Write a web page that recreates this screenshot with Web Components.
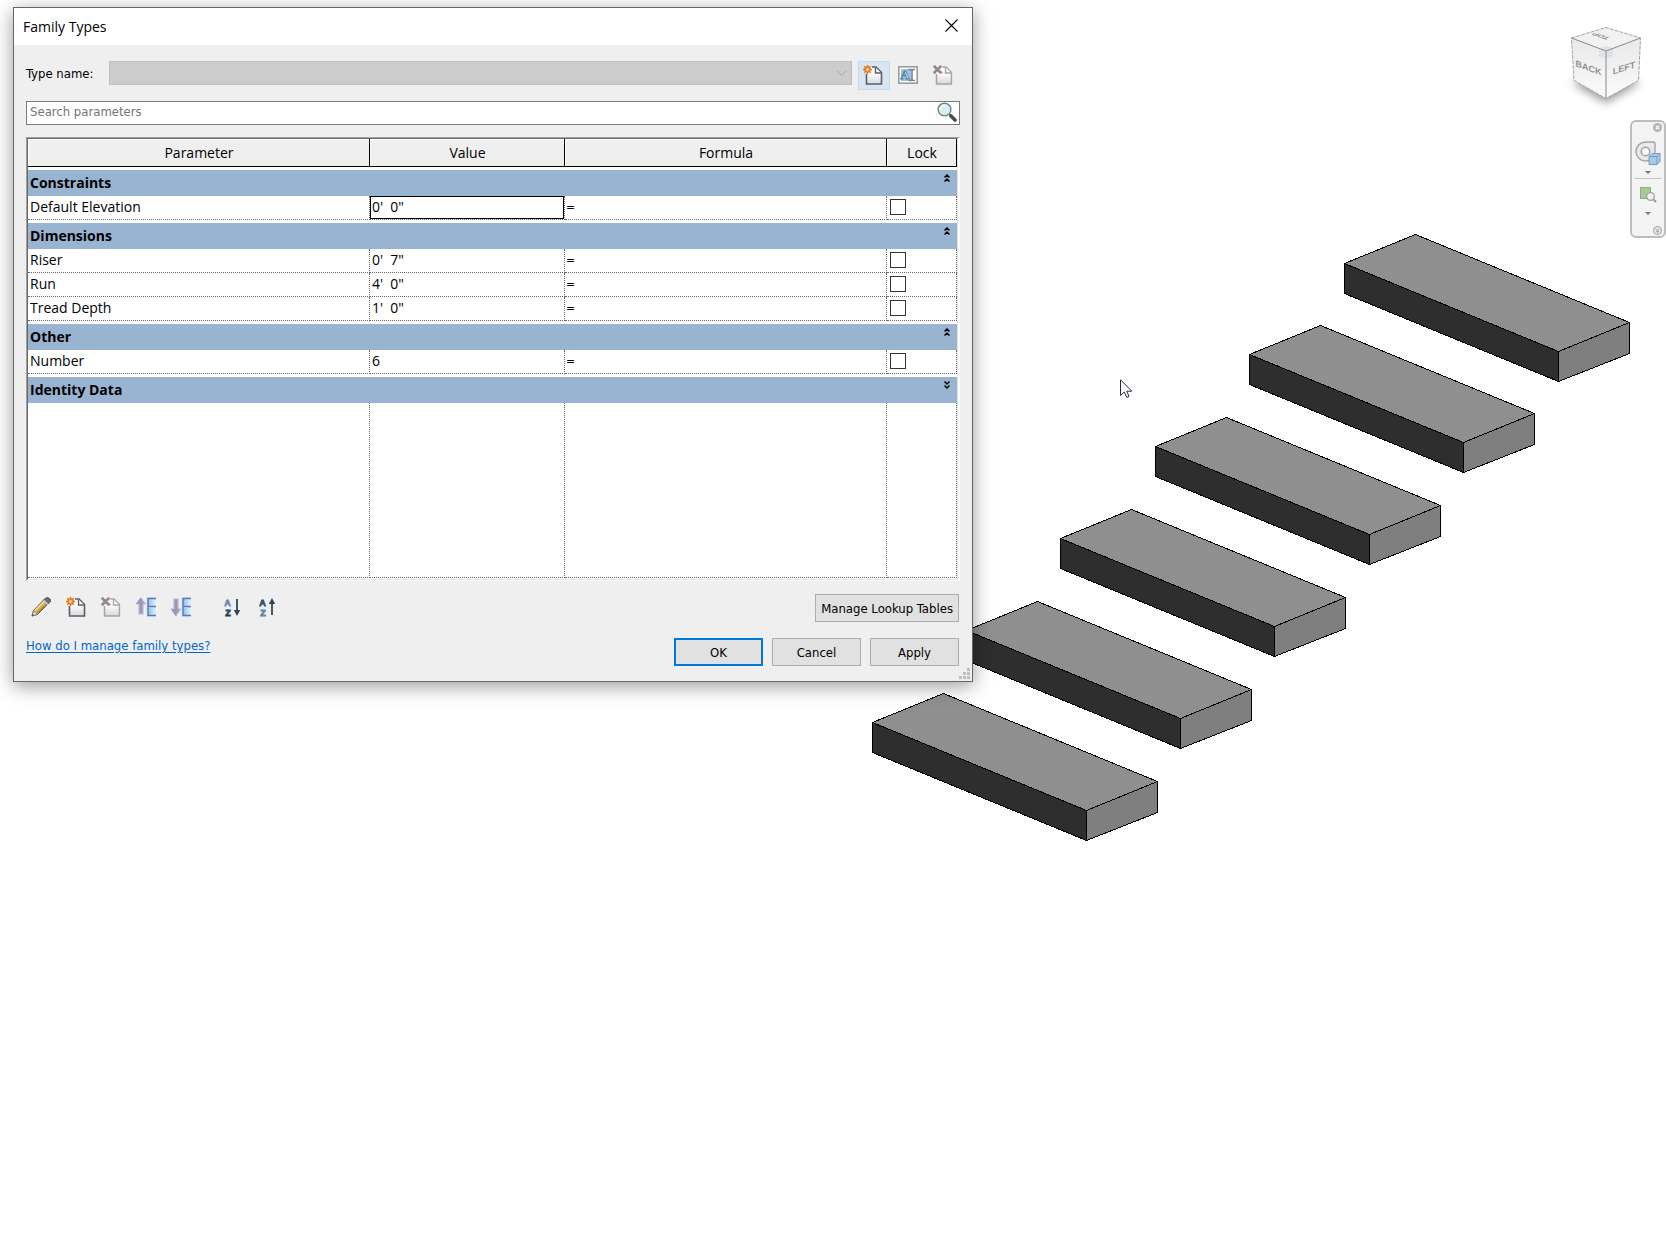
<!DOCTYPE html>
<html lang="en">
<head>
<meta charset="utf-8">
<title>Family Types</title>
<style>
  html, body { height: 100%; }
  body { margin: 0; background: #fff; overflow: hidden; }
</style>
</head>
<body>

<model-viewport>
  <view-cube slot="cube"></view-cube>
  <nav-bar slot="nav"></nav-bar>
  <mouse-cursor slot="cursor"></mouse-cursor>

  <dialog-window slot="window" caption="Family Types">
    <type-name-row></type-name-row>
    <search-box></search-box>
    <param-grid></param-grid>
    <dialog-footer></dialog-footer>
  </dialog-window>
</model-viewport>

<script>
const page = `
  <path d="M3.5 6V19.2H18.5V7.5L13 2H8Z" fill="url(#pg)" stroke="none"/>
  <path d="M3.5 9V19H18.5V7.5L13 2H9" fill="none" stroke="var(--ink)" stroke-width="1.6"/>
  <path d="M12.5 2.5V8H18" fill="#fff" stroke="var(--ink)" stroke-width="1.4"/>`;
const pageGradient = `
  <linearGradient id="pg" x1="0" y1="0" x2="0" y2="1">
    <stop offset=".3" stop-color="#fff"/><stop offset="1" stop-color="#d9d9de"/>
  </linearGradient>`;
const levels = `
  <linearGradient id="lv"><stop offset="0" stop-color="#8fc0ea"/><stop offset="1" stop-color="#e4f3fc"/></linearGradient>
  <rect x="10.5" y="0" width="9.5" height="19.5" fill="#e6daf5"/>
  <rect x="12" y="1" width="8" height="8" fill="url(#lv)"/>
  <rect x="12" y="11" width="8" height="7.5" fill="url(#lv)"/>
  <path d="M20 1.5H12V18.5H20M12 9.5H20" fill="none" stroke="#4a80bd" stroke-width="1.4"/>`;
const letters = (top) => `
  <g font-family="'Liberation Sans', sans-serif" font-weight="bold" font-size="9" text-anchor="middle" stroke-width=".8">
    <text x="5.5" y="8.5" fill="${top ? "#6c8db4" : "#35506f"}" stroke="${top ? "#6c8db4" : "#35506f"}">A</text>
    <text x="6" y="19" fill="${top ? "#27425f" : "#6584aa"}" stroke="${top ? "#27425f" : "#6584aa"}">Z</text>
  </g>`;

const ICONS = {
  "new": `<g style="--ink:#5c5f66">${pageGradient}${page}</g>
    <path d="M4.5 0V9M0 4.5H9M1.3 1.3L7.7 7.7M7.7 1.3L1.3 7.7" stroke="#e8771a" stroke-width="1.5"/>
    <circle cx="4.5" cy="4.5" r="2.8" fill="#f9a03c" stroke="#dd6510"/>
    <circle cx="4.5" cy="4.5" r="1.2" fill="#ffe2a0"/>`,
  "delete": `<path d="M2.5 6V20H20V7L13 1H8Z" fill="#fff"/>
    <g style="--ink:#a5a5a8">${pageGradient}${page}</g>
    <path d="M.8 .8L8.2 8.2M8.2 .8L.8 8.2" stroke="#fff" stroke-width="4"/>
    <path d="M.8 .8L8.2 8.2M8.2 .8L.8 8.2" stroke="#938a8a" stroke-width="2.8"/>
    <path d="M8 6.5l1.5 1.5" stroke="#d0806f" stroke-width="1.5"/>`,
  "rename": `<rect x=".8" y="1.8" width="18.4" height="16.4" fill="#fff" stroke="#9b9b9b" stroke-width="1.6"/>
    <rect x="3" y="4" width="10" height="12" fill="#93c6e8"/>
    <text x="7" y="14" font-family="'Liberation Serif', serif" font-weight="bold" font-size="13" text-anchor="middle" fill="#e9f5fc" stroke="#5c7f9c" stroke-width=".8">A</text>
    <path d="M10.5 4.5H13L14 5.5L15 4.5H17M14 5V15M10.5 15.5H13L14 14.5L15 15.5H17" fill="none" stroke="#78828c" stroke-width="1.6"/>`,
  "search": `<path d="M12 12L14 14" stroke="#777" stroke-width="2"/>
    <path d="M14 14L18 18" stroke="#474b4d" stroke-width="3.6" stroke-linecap="round"/>
    <circle cx="7.5" cy="7.5" r="6.4" fill="#d5eef1" stroke="#70797b" stroke-width="1.3"/>
    <path d="M3.5 8a4.5 4.5 0 0 1 4-4.5" fill="none" stroke="#fff" stroke-width="1.8"/>`,
  "edit": `<path d="M1 19L2.5 13.5L13.5 2L18 6L6.5 17.5Z" fill="#d3ac5f" stroke="#655a45"/>
    <path d="M4 13.5L14 3.5" stroke="#f4dfa8" stroke-width="1.6"/>
    <path d="M6.5 16L16.5 6.5" stroke="#a67c38" stroke-width="1.4"/>
    <path d="M12.8 3.2L15 .8Q17 0 19 2T19 5L17 7.2Z" fill="#7a6668" stroke="#5b5b60"/>
    <path d="M12.6 3.4L16.8 7.4" stroke="#c3c8cd" stroke-width="1.6"/>
    <path d="M1 19L2.5 13.8L6.2 17.4Z" fill="#f3e8d8" stroke="#7b7b78" stroke-width=".8"/>
    <path d="M.6 19.4L3 17.9L2 16.8Z" fill="#444"/>`,
  "up": `${levels}<path d="M5 1L9.5 7H7V17H3V7H.5Z" fill="#9b9b9f" stroke="#c6b0e6" stroke-width="1.2"/>
    <path d="M.5 7L5 1" stroke="#7387d8"/>`,
  "down": `${levels}<path d="M3 2H7V12H9.5L5 18.5L.5 12H3Z" fill="#9b9b9f" stroke="#c6b0e6" stroke-width="1.2"/>
    <path d="M.5 12L5 18.5" stroke="#7387d8"/>`,
  "az": `${letters(true)}<path d="M15 2V15" stroke="#2d4660" stroke-width="1.8"/><path d="M11.8 13H18.2L15 19Z" fill="#2d4660"/>`,
  "za": `${letters(false)}<path d="M15 6V18" stroke="#2d4660" stroke-width="1.8"/><path d="M11.8 7H18.2L15 1Z" fill="#2d4660"/>`
};

const icon = (name) => `<svg width="20" height="22" viewBox="0 0 20 22" aria-hidden="true">${ICONS[name]}</svg>`;

const UI_FONT    = `"Open Sans", "Noto Sans", sans-serif`;
const SMALL_FONT = `"DejaVu Sans Condensed", "DejaVu Sans", sans-serif`;

/* Shared base: every element renders its own template once, in an open root */
class BaseElement extends HTMLElement {
  constructor() {
    super();
    this.attachShadow({mode: "open"});
  }
  connectedCallback() {
    this.shadowRoot.innerHTML = this.render();
  }
}

customElements.define("model-viewport", class extends BaseElement {
  render() {
    // one tread is drawn, the rest are copies shifted up the flight
    let steps = "";
    for (let i = 5; i >= 0; i--) {
      steps += `<use href="#tread" x="${Math.floor(872 + i * 94.4)}" y="${Math.floor(722 - i * 91.8)}"/>`;
    }
    return `
      <style>
        :host { display: block; position: relative; height: 100%; background: #fff; overflow: hidden; }
        .model { display: block; width: 100%; height: 100%; }
        ::slotted(*) { position: absolute; }
        ::slotted(view-cube) { top: 20px; right: 20px; }
        ::slotted(nav-bar) { top: 120px; right: 0; }
        ::slotted(mouse-cursor) { left: 1120px; top: 379px; }
        ::slotted(dialog-window) { left: 13px; top: 7px; }
      </style>
      <svg class="model" role="img" aria-label="Stair treads">
        <defs>
          <g id="tread" stroke="#000" stroke-linejoin="round" shape-rendering="crispEdges">
            <path d="M.5 .5L71.5 -28.5L285.5 59.5L214.5 88.5Z" fill="#8f8f8f"/>
            <path d="M.5 .5L214.5 88.5V118.5L.5 30.5Z" fill="#2e2e2e"/>
            <path d="M214.5 88.5L285.5 59.5V90.5L214.5 118.5Z" fill="#7f7f7f"/>
          </g>
        </defs>
        ${steps}
      </svg>
      <slot name="cube"></slot>
      <slot name="nav"></slot>
      <slot name="cursor"></slot>
      <slot name="window"></slot>`;
  }
});

customElements.define("view-cube", class extends BaseElement {
  render() {
    return `
      <style>:host { display: block; } svg { display: block; }</style>
      <svg width="86" height="90" viewBox="1560 20 86 90">
        <defs>
          <filter id="soft" x="-30%" y="-50%" width="160%" height="200%"><feGaussianBlur stdDeviation="5"/></filter>
          <linearGradient id="face" x1="0" y1="0" x2="0" y2="1">
            <stop offset="0" stop-color="#e9e9ea"/><stop offset="1" stop-color="#fafafa"/>
          </linearGradient>
        </defs>
        <path d="M1572 83L1606 70L1640 83L1606 103Z" fill="#000" opacity=".4" filter="url(#soft)"/>
        <path d="M1571.5 38L1606 27.5L1640.5 38L1606 51Z" fill="#f1f1f2"/>
        <path d="M1571.5 38L1606 51V98.5L1574 80.5Z" fill="url(#face)"/>
        <path d="M1640.5 38L1606 51V98.5L1638.5 80.5Z" fill="url(#face)"/>
        <path d="M1599 48L1606 46L1613 48V56L1606 59L1599 56Z" fill="#e0e3e6"/>
        <path d="M1571.5 38L1606 27.5L1640.5 38L1638.5 80.5L1606 98.5L1574 80.5Z" fill="none" stroke="#a5a5a6" stroke-dasharray="4 1"/>
        <path d="M1571.5 38L1606 51L1640.5 38M1606 51V98.5" fill="none" stroke="#8a8a8b"/>
        <g font-family="'Liberation Sans Narrow', 'Liberation Sans', sans-serif" font-weight="bold" font-size="9" fill="#8f9296" text-anchor="middle">
          <text transform="translate(1588.5 71) skewY(20)">BACK</text>
          <text transform="translate(1624 71) skewY(-18)">LEFT</text>
          <text transform="matrix(-.85 -.28 .7 -.35 1603 35)">TOP</text>
        </g>
      </svg>`;
  }
});

customElements.define("nav-bar", class extends BaseElement {
  render() {
    return `
      <style>
        :host {
          display: flex; flex-direction: column; align-items: center;
          box-sizing: border-box; width: 36px; height: 118px; padding: 1px 2px;
          border: 2px solid #bdbdbd; border-radius: 6px; background: #f3f3f3;
        }
        button { display: flex; justify-content: center; padding: 0; border: 0; background: none; }
        svg { display: block; }
        .edge { align-self: flex-end; }
        hr { width: 26px; margin: 4px 0 8px; border: 0; border-top: 1px solid #c4c4c4; }
        .wheel { margin-top: 9px; }
        .arrow { margin-top: 5px; }
        .zoom + .arrow { margin-top: 8px; }
        .bottom { margin-top: auto; }
      </style>
      <button class="edge" aria-label="Close navigation bar">
        <svg width="9" height="9" viewBox="0 0 9 9"><circle cx="4.5" cy="4.5" r="4.5" fill="#b3b3b3"/><path d="M2.7 2.7L6.3 6.3M6.3 2.7L2.7 6.3" stroke="#fff" stroke-width="1.2"/></svg>
      </button>
      <button class="wheel" aria-label="Steering wheels">
        <svg width="26" height="25" viewBox="0 0 26 25">
          <path d="M10.5 1H18Q20 1 20 3V10.5A9.5 9.5 0 1 1 10.5 1Z" fill="#e9e9eb" stroke="#a3a3a8" stroke-width="1.4"/>
          <circle cx="10.5" cy="10.5" r="4.3" fill="#fafafa" stroke="#a3a3a8" stroke-width="1.6"/>
          <path d="M14 15.5L17 12.5H25V20.5L22 23.5H14Z" fill="#a9c8e6" stroke="#6f9dc9"/>
          <path d="M14 15.5H22V23.5M22 15.5L25 12.5" fill="none" stroke="#6f9dc9"/>
        </svg>
      </button>
      <svg class="arrow" width="6" height="3"><path d="M0 0H6L3 3Z" fill="#777"/></svg>
      <hr>
      <button class="zoom" aria-label="Zoom region">
        <svg width="20" height="17" viewBox="0 2 20 17">
          <rect x="2.5" y="2.5" width="10" height="11" fill="#a7c898" stroke="#8cb37b"/>
          <path d="M15 14L18 17" stroke="#999" stroke-width="2"/>
          <circle cx="12.5" cy="11.5" r="3.8" fill="#eef2f5" stroke="#a2a2a5" stroke-width="1.3"/>
        </svg>
      </button>
      <svg class="arrow" width="6" height="3"><path d="M0 0H6L3 3Z" fill="#777"/></svg>
      <button class="edge bottom" aria-label="Navigation bar options">
        <svg width="9" height="9" viewBox="0 0 9 9"><circle cx="4.5" cy="4.5" r="3.9" fill="#eee" stroke="#b3b3b3" stroke-width="1.3"/><path d="M2.3 3.5H6.7M3 5H6L4.5 6.7Z" fill="#a5a5a5" stroke="#a5a5a5" stroke-width=".8"/></svg>
      </button>`;
  }
});

customElements.define("mouse-cursor", class extends BaseElement {
  render() {
    return `
      <style>:host { display: block; pointer-events: none; } svg { display: block; }</style>
      <svg width="14" height="21" viewBox="0 0 14 21">
        <path d="M.5 .8V16.5L4.3 13L6.8 18.4L9 17.5L6.8 12.2H11.8Z" fill="#fff" stroke="#2b2b38"/>
      </svg>`;
  }
});

customElements.define("dialog-window", class extends BaseElement {
  render() {
    return `
      <style>
        :host {
          display: block; box-sizing: border-box; width: 960px; max-width: calc(100% - 26px);
          border: 1px solid #666; background: #efefef; color: #000;
          font: 14px/20px ${UI_FONT};
          box-shadow: 0 4px 18px rgba(0, 0, 0, .4);
        }
        header { display: flex; align-items: center; height: 37px; padding: 0 14px 0 9px; background: #fff; }
        h1 { flex: 1; margin: 0; font: inherit; }
        button { padding: 0 0 2px; border: 0; background: none; }
        svg { display: block; }
        .body { display: flex; flex-direction: column; padding: 16px 12px 15px; }
        .grip { position: absolute; right: 2px; bottom: 2px; }
      </style>
      <header>
        <h1>${this.getAttribute("caption")}</h1>
        <button aria-label="Close">
          <svg width="13" height="13" viewBox="0 0 13 13"><path d="M.5 .5L12.5 12.5M12.5 .5L.5 12.5" stroke="#000" stroke-width="1.1"/></svg>
        </button>
      </header>
      <div class="body"><slot></slot></div>
      <svg class="grip" width="11" height="11" fill="#bfbfbf">
        <path d="M8 0h3v3h-3zM4 4h3v3h-3zM8 4h3v3h-3zM0 8h3v3h-3zM4 8h3v3h-3zM8 8h3v3h-3z"/>
      </svg>`;
  }
});

customElements.define("tool-button", class extends BaseElement {
  render() {
    return `
      <style>
        :host { display: block; }
        button {
          display: flex; justify-content: center; align-items: flex-start; box-sizing: border-box;
          width: 32px; height: 29px; padding: 3px 2px 0 0; border: 1px solid transparent; background: none;
        }
        :host([active]) button { border-color: #c0dcf3; background: #d8e6f2; }
      </style>
      <button aria-label="${this.getAttribute("label")}">${icon(this.getAttribute("icon"))}</button>`;
  }
});

customElements.define("push-button", class extends BaseElement {
  render() {
    return `
      <style>
        :host { display: block; }
        button {
          box-sizing: border-box; min-width: 89px; height: 28px; padding: 2px 5px 0;
          border: 1px solid #adadad; background: #e1e1e1; color: #000; font: 13px/16px ${SMALL_FONT};
        }
        :host([default]) button { border: 2px solid #0078d7; }
      </style>
      <button><slot></slot></button>`;
  }
});

customElements.define("type-name-row", class extends BaseElement {
  render() {
    return `
      <style>
        :host { display: flex; align-items: flex-start; font: 13px/26px ${SMALL_FONT}; }
        label { width: 83px; }
        .combo { flex: 1; display: grid; align-items: center; margin-right: 6px; }
        select, .combo svg { grid-area: 1 / 1; }
        select {
          appearance: none; width: 100%; height: 24px; margin: 0; padding: 0 20px 0 4px;
          border: 1px solid #bfbfbf; border-radius: 0; background: #ccc; opacity: 1;
        }
        .combo svg { justify-self: end; margin-right: 5px; }
        .tools { display: flex; gap: 3px; }
      </style>
      <label for="type">Type name:</label>
      <div class="combo">
        <select id="type" disabled></select>
        <svg width="11" height="7"><path d="M1 1L5.5 5.5L10 1" fill="none" stroke="#a3a3a3"/></svg>
      </div>
      <div class="tools">
        <tool-button icon="new" label="New type" active></tool-button>
        <tool-button icon="rename" label="Rename type"></tool-button>
        <tool-button icon="delete" label="Delete type"></tool-button>
      </div>`;
  }
});

customElements.define("search-box", class extends BaseElement {
  render() {
    return `
      <style>
        :host {
          display: flex; align-items: center; box-sizing: border-box; height: 24px;
          margin-top: 11px; padding: 0 2px 0 3px; border: 1px solid #7a7a7a; background: #fff;
        }
        input { flex: 1; min-width: 0; padding: 0 0 2px; border: 0; outline: 0; background: none; font: 13px/16px ${SMALL_FONT}; }
        input::placeholder { color: #757575; opacity: 1; }
        svg { display: block; }
      </style>
      <input type="text" aria-label="Search parameters" placeholder="Search parameters">
      ${icon("search")}`;
  }
});

const GROUPS = [
  {name: "Constraints", open: true, rows: [["Default Elevation", `0'  0"`, true]]},
  {name: "Dimensions", open: true, rows: [["Riser", `0'  7"`], ["Run", `4'  0"`], ["Tread Depth", `1'  0"`]]},
  {name: "Other", open: true, rows: [["Number", "6"]]},
  {name: "Identity Data", open: false, rows: []}
];

customElements.define("param-grid", class extends BaseElement {
  _row([name, value, focused]) {
    return `
      <tr>
        <td>${name}</td>
        <td class="value"><input type="text" class="${focused ? "focused" : ""}" aria-label="${name} value" value="${value.replace(/"/g, "&quot;")}"></td>
        <td class="formula">=</td>
        <td class="lock"><input type="checkbox" aria-label="Lock ${name}"></td>
      </tr>`;
  }

  _group(g) {
    const d = g.open ? "M.5 3.5L3 1L5.5 3.5M.5 7.5L3 5L5.5 7.5" : "M.5 .5L3 3L5.5 .5M.5 4.5L3 7L5.5 4.5";
    return `
      <tbody>
        <tr class="group">
          <th colspan="4" scope="rowgroup">
            <div>${g.name}
              <button aria-label="Toggle ${g.name}" aria-expanded="${g.open}">
                <svg width="6" height="8"><path d="${d}" fill="none" stroke="#000" stroke-width="1.5"/></svg>
              </button>
            </div>
          </th>
        </tr>
        ${g.rows.map(r => this._row(r)).join("")}
      </tbody>`;
  }

  render() {
    return `
      <style>
        :host {
          display: block; margin-top: 12px; padding-right: 1px; background: #fff;
          border: 1px solid; border-color: #a0a0a0 #fff #fff #a0a0a0;
        }
        .inner { padding: 0 0 1px; border: 1px solid; border-color: #696969 #e3e3e3 #e3e3e3 #696969; }
        table { width: 100%; table-layout: fixed; border-collapse: separate; border-spacing: 0; }
        th, td { box-sizing: border-box; padding: 0; text-align: left; }
        .name { width: 342px; }
        .val { width: 195px; }
        .lck { width: 70px; }
        thead th {
          height: 28px; padding-left: 1px; text-align: center; font-weight: normal; background: #efefef;
          border-right: 1px solid #000; border-bottom: 1px solid #000;
          box-shadow: inset 1px 1px #fff;
        }
        .group th { height: 29px; border-top: 3px solid #fff; background: #99b4d1; background-clip: padding-box; font-weight: bold; }
        .group div { display: flex; justify-content: space-between; padding: 0 7px 0 2px; }
        .group button { align-self: flex-start; padding: 1px 0; border: 0; background: none; }
        svg { display: block; }
        td {
          height: 24px; padding-left: 2px; line-height: 21px; vertical-align: top;
          border-right: 1px dotted #666; border-bottom: 1px dotted #666;
        }
        .value { padding: 0; }
        .value input {
          display: block; box-sizing: border-box; width: 100%; height: 23px; padding: 0 1px 2px;
          border: 1px solid transparent; outline: 0; background: none; font: inherit; white-space: pre;
        }
        .value input.focused { border-color: #000; }
        .formula { padding-left: 1px; font: 12px/22px ${SMALL_FONT}; }
        .lock { padding: 3px 0 0 3px; }
        .lock input {
          appearance: none; display: block; width: 16px; height: 16px; margin: 0;
          border: 1px solid #333; background: #fff;
        }
        .filler td { height: 175px; }
      </style>
      <div class="inner">
        <table>
          <colgroup><col class="name"><col class="val"><col><col class="lck"></colgroup>
          <thead>
            <tr><th scope="col">Parameter</th><th scope="col">Value</th><th scope="col">Formula</th><th scope="col">Lock</th></tr>
          </thead>
          ${GROUPS.map(g => this._group(g)).join("")}
          <tbody class="filler"><tr><td></td><td></td><td></td><td></td></tr></tbody>
        </table>
      </div>`;
  }
});

customElements.define("dialog-footer", class extends BaseElement {
  render() {
    return `
      <style>
        :host { display: flex; flex-direction: column; gap: 16px; margin-top: 13px; padding-right: 1px; font: 13px/16px ${SMALL_FONT}; }
        .row { display: flex; justify-content: space-between; align-items: flex-start; height: 28px; }
        .tools, .actions { display: flex; }
        .tools { gap: 3px; margin-top: -1px; }
        .sort { margin-left: 16px; }
        .actions { gap: 9px; }
        a { color: #0066cc; text-underline-offset: 2px; }
      </style>
      <div class="row">
        <div class="tools">
          <tool-button icon="edit" label="Edit parameter"></tool-button>
          <tool-button icon="new" label="New parameter"></tool-button>
          <tool-button icon="delete" label="Delete parameter"></tool-button>
          <tool-button icon="up" label="Move up"></tool-button>
          <tool-button icon="down" label="Move down"></tool-button>
          <tool-button class="sort" icon="az" label="Sort ascending"></tool-button>
          <tool-button icon="za" label="Sort descending"></tool-button>
        </div>
        <push-button>Manage Lookup Tables</push-button>
      </div>
      <div class="row">
        <a href="#">How do I manage family types?</a>
        <div class="actions">
          <push-button default>OK</push-button>
          <push-button>Cancel</push-button>
          <push-button>Apply</push-button>
        </div>
      </div>`;
  }
});
</script>
</body>
</html>
